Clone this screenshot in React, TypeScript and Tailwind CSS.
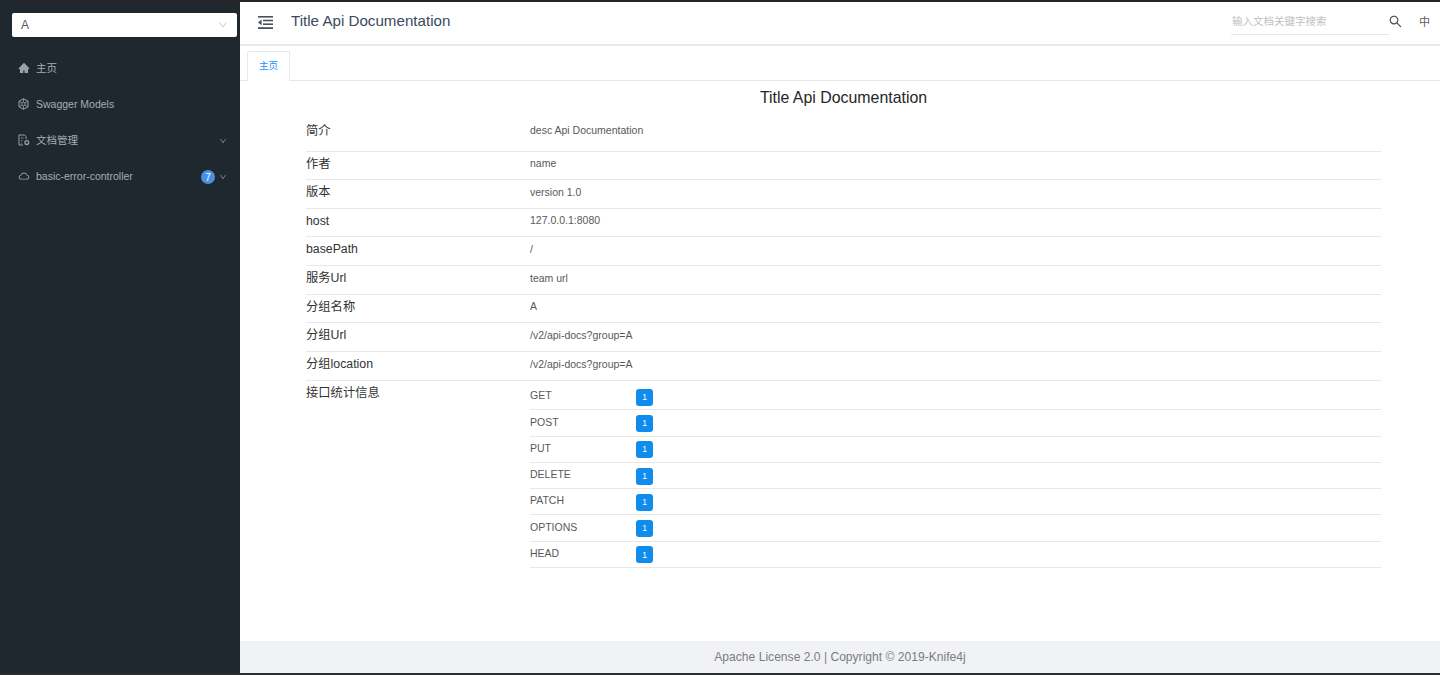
import { AiFillHome, AiOutlineCloud, AiOutlineDown, AiOutlineSearch } from "react-icons/ai";

const infoRows = [
  { label: "作者", value: "name", height: "h-[28px]" },
  { label: "版本", value: "version 1.0", height: "h-[29px]" },
  { label: "host", value: "127.0.0.1:8080", height: "h-[28px]" },
  { label: "basePath", value: "/", height: "h-[29px]" },
  { label: "服务Url", value: "team url", height: "h-[29px]" },
  { label: "分组名称", value: "A", height: "h-[28px]" },
  { label: "分组Url", value: "/v2/api-docs?group=A", height: "h-[29px]" },
  { label: "分组location", value: "/v2/api-docs?group=A", height: "h-[29px]" },
];

const methods = ["GET", "POST", "PUT", "DELETE", "PATCH", "OPTIONS", "HEAD"];

function MenuIcon() {
  return (
    <svg width="15" height="13" viewBox="0 0 15 13" className="-mt-[2px] shrink-0 text-[#47525e]" fill="currentColor">
      <rect x="0" y="0" width="15" height="1.6" />
      <rect x="5" y="3.7" width="10" height="1.6" />
      <rect x="5" y="7.4" width="10" height="1.6" />
      <rect x="0" y="11.2" width="15" height="1.8" />
      <path d="M3.6 3.6v5.6L0 6.4z" />
    </svg>
  );
}

function ModelIcon() {
  return (
    <svg width="11" height="12" viewBox="0 0 11 12" fill="none" stroke="currentColor" strokeWidth="1">
      <path d="M5.5 .7l4.5 2.5v5.6l-4.5 2.5L1 8.8V3.2z" />
      <path d="M5.5 .7v3.4M1 3.2l3 1.8M10 3.2L7 5M1 8.8l3-1.8M10 8.8L7 7M5.5 11.3V7.9M4 5l1.5-.9L7 5v2l-1.5.9L4 7z" strokeWidth=".8" />
    </svg>
  );
}

function DocIcon() {
  return (
    <svg width="12" height="12" viewBox="0 0 12 12" fill="none" stroke="currentColor" strokeWidth="1">
      <path d="M5 11H1V1h5.5L8 2.5V5" />
      <path d="M3 4h2.5M3 6.5h1.5M3 9h1" strokeWidth=".8" />
      <circle cx="8.8" cy="8.6" r="1.9" strokeWidth="1.3" />
    </svg>
  );
}

function NavItem({ icon, label, badge, arrow }: { icon: React.ReactNode; label: string; badge?: string; arrow?: boolean }) {
  return (
    <div className="flex h-[36px] items-center pl-[18px] pr-[13px] text-[10.5px] text-[#a6adb4]">
      <span className="-mt-[2px] flex w-[18px] shrink-0 items-center text-[12px] text-[#9aa1a7]">{icon}</span>
      <span className="flex-1">{label}</span>
      {badge && (
        <span className="mr-[4px] flex h-[14px] w-[14px] items-center justify-center rounded-full bg-[#4a90e2] text-[10px] text-white">
          {badge}
        </span>
      )}
      {arrow && <AiOutlineDown className="text-[8px] text-[#8b949b]" />}
    </div>
  );
}

export default function App() {
  return (
    <div className="flex h-[675px] w-[1440px] flex-col overflow-hidden bg-white font-['Liberation_Sans','Noto_Sans_CJK_SC',sans-serif]">
      <div className="h-[2px] shrink-0 bg-[#23272b]" />
      <div className="flex min-h-0 flex-1">
        {/* Sidebar */}
        <aside className="w-[240px] shrink-0 bg-[#1f282e]">
          <div className="ml-[12px] mt-[11px] flex h-[24px] w-[225px] items-center justify-between rounded-[2px] bg-white pl-[9px] pr-[9px] text-[12px] text-[#595959]">
            <span>A</span>
            <AiOutlineDown className="text-[10px] text-[#bfbfbf]" />
          </div>
          <nav className="mt-[14px]">
            <NavItem icon={<AiFillHome />} label="主页" />
            <NavItem icon={<ModelIcon />} label="Swagger Models" />
            <NavItem icon={<DocIcon />} label="文档管理" arrow />
            <NavItem icon={<AiOutlineCloud />} label="basic-error-controller" badge="7" arrow />
          </nav>
        </aside>

        {/* Main */}
        <main className="flex min-w-0 flex-1 flex-col">
          <header className="flex h-[44px] shrink-0 items-center border-b-[2px] border-[#e8eaef] pl-[18px] pr-[10px]">
            <MenuIcon />
            <h1 className="-mt-[3px] ml-[18px] flex-1 text-[15.15px] text-[#3a4a5c]">Title Api Documentation</h1>
            <div className="mb-[5px] ml-[1px] flex h-[28px] w-[158px] items-center border-b border-[#e8e8e8] pl-[1px] pt-[4px] text-[10.5px] text-[#bfbfbf]">
              输入文档关键字搜索
            </div>
            <AiOutlineSearch className="-mt-[3px] -ml-[1px] mr-[16px] text-[15px] text-[#3f4a56]" />
            <span className="-mt-[2px] text-[11px] text-[#5c5c5c]">中</span>
          </header>

          <div className="flex h-[35px] shrink-0 items-end border-b border-[#e8e8e8] pl-[7px]">
            <div className="-mb-px flex h-[30px] w-[43px] items-center justify-center rounded-t-[2px] border border-b-0 border-[#e8e8e8] bg-white text-[9.5px] text-[#1890ff]">
              主页
            </div>
          </div>

          <div className="min-h-0 flex-1">
            <h2 className="mt-[6px] pl-[7px] text-center text-[15.9px] leading-[22px] text-[#262626]">Title Api Documentation</h2>
            <div className="ml-[66px] mr-[59px] mt-[4px]">
              <div className="flex h-[39px] border-b border-[#e8e8e8]">
                <div className="w-[224px] pt-[9px] text-[12.3px] leading-[18px] text-[#333]">简介</div>
                <div className="pt-[8px] text-[10.5px] leading-[18px] text-[#595959]">desc Api Documentation</div>
              </div>
              {infoRows.map((row) => (
                <div key={row.label} className={`flex ${row.height} items-center border-b border-[#e8e8e8] pb-[3px]`}>
                  <div className="w-[224px] text-[12.3px] text-[#333]">{row.label}</div>
                  <div className="text-[10.5px] text-[#595959]">{row.value}</div>
                </div>
              ))}
              <div className="flex">
                <div className="w-[224px] pt-[3px] text-[12.3px] leading-[18px] text-[#333]">接口统计信息</div>
                <div className="mt-[3px] flex-1">
                  {methods.map((method) => (
                    <div key={method} className="flex h-[26.3px] items-center border-b border-[#e8e8e8] pt-[1px] text-[10.5px] text-[#595959]">
                      <span className="w-[106px] -translate-y-px">{method}</span>
                      <span className="flex h-[17px] w-[17px] items-center justify-center rounded-[3px] bg-[#0f8cec] text-[8.5px] text-white">1</span>
                    </div>
                  ))}
                </div>
              </div>
            </div>
          </div>

          <footer className="flex h-[32px] shrink-0 items-center justify-center bg-[#f0f2f5] text-[12.1px] text-[#7d7d7d]">
            Apache License 2.0 | Copyright © 2019-Knife4j
          </footer>
        </main>
      </div>
      <div className="h-[2px] shrink-0 bg-[#2a2d30]" />
    </div>
  );
}
